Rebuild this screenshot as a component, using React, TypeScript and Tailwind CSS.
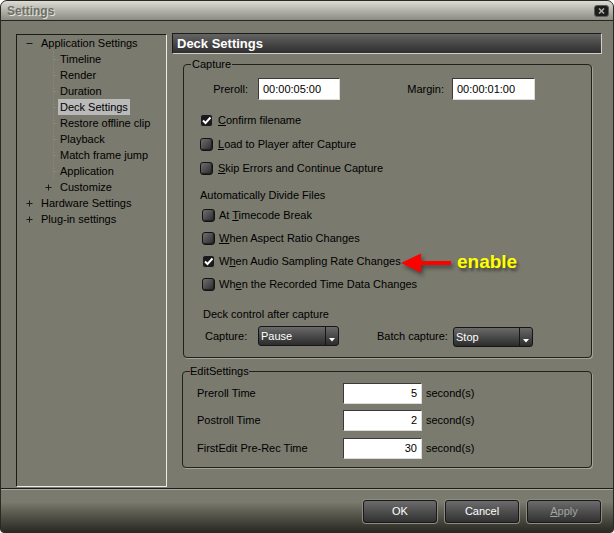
import React from 'react';

const font = "font-['Liberation_Sans',Arial,sans-serif]";

const Box: React.FC<{ checked?: boolean }> = ({ checked }) => (
    checked ? (
        <div className="w-[13px] h-[13px] rounded-[3px] border border-[#7a7a76] bg-[#1a1a1a] flex items-center justify-center">
            <svg width="11" height="11" viewBox="0 0 11 11">
                <path d="M2 5.5 L4.5 8 L9.5 2.5" stroke="#fff" strokeWidth="2" fill="none" />
            </svg>
        </div>
    ) : (
        <div className="w-[13px] h-[13px] rounded-[3px] border border-[#121212] bg-gradient-to-br from-[#707070] to-[#2c2c2c] shadow-[inset_-1px_-1px_1px_#222]" />
    )
);

const CheckRow: React.FC<{ checked?: boolean; h: string; pl: string; gap: string; children: React.ReactNode }> = ({ checked, h, pl, gap, children }) => (
    <div className={`flex items-center ${h} ${pl} ${gap}`}>
        <Box checked={checked} />
        <span>{children}</span>
    </div>
);

const Field: React.FC<{ value: string; w: string; right?: boolean; h?: string }> = ({ value, w, right, h }) => (
    <div className={`${w} ${h ?? 'h-[22px]'} bg-white border border-t-[#3a3a3a] border-l-[#3a3a3a] border-b-[#dcdcd4] border-r-[#dcdcd4] flex items-center px-[4px] ${right ? 'justify-end' : ''}`}>
        {value}
    </div>
);

const Select: React.FC<{ value: string; w: string; extra?: string }> = ({ value, w, extra }) => (
    <div className={`${w} ${extra ?? ''} h-[20px] rounded-[3px] border border-[#161616] bg-gradient-to-b from-[#6a6a6a] to-[#2c2c2c] flex text-white`}>
        <div className="flex-1 flex items-center pl-[2px]">{value}</div>
        <div className="w-[13px] border-l border-[#161616] flex items-end justify-center pb-[3px]">
            <svg width="6" height="4" viewBox="0 0 6 4"><path d="M0 0 H6 L3 3.5 Z" fill="#fff" /></svg>
        </div>
    </div>
);

const Button: React.FC<{ children: React.ReactNode; disabled?: boolean }> = ({ children, disabled }) => (
    <div className={`w-[74px] h-[23px] rounded-[3px] border border-[#181818] shadow-[0_0_0_1px_#8c8c84] bg-gradient-to-b from-[#6c6c6c] to-[#323232] flex items-center justify-center ${disabled ? 'text-[#a4a4a0]' : 'text-white'}`}>
        {children}
    </div>
);

const Expander: React.FC<{ plus?: boolean }> = ({ plus }) => (
    <svg width="7" height="7" viewBox="0 0 7 7">
        <path d="M0.5 3.5 H6.5" stroke="#1a1a1a" strokeWidth="1" />
        {plus && <path d="M3.5 0.5 V6.5" stroke="#1a1a1a" strokeWidth="1" />}
    </svg>
);

const tree = ['Timeline', 'Render', 'Duration', 'Deck Settings', 'Restore offline clip', 'Playback', 'Match frame jump', 'Application'];

export default function App() {
    return (
        <div className={`${font} text-[11px] text-black relative w-[614px] h-[533px] flex flex-col rounded-t-[7px] rounded-b-[4px] border border-[#2a2a24] overflow-hidden bg-[#7a7a6e]`}>
            {/* title bar */}
            <div className="h-[20px] border-b border-[#26261f] bg-gradient-to-b from-[#dcdcd4] to-[#8c8c84] flex items-center justify-between pl-[6px] pr-[4px]">
                <span className="text-[12px] font-bold text-[#6e6e66] [text-shadow:1px_1px_0_#e4e4dc]">Settings</span>
                <div className="w-[15px] h-[12px] rounded-[3px] bg-[#1c1c1c] border border-[#5a5a56] flex items-center justify-center">
                    <svg width="7" height="6" viewBox="0 0 7 6"><path d="M1 0.5 L6 5.5 M6 0.5 L1 5.5" stroke="#b0b0aa" strokeWidth="1.5" /></svg>
                </div>
            </div>

            {/* body */}
            <div className="h-[467px] flex">
                <div className="ml-[15px] mt-[13px] w-[151px] h-[453px] border border-t-[#1a1a18] border-l-[#1a1a18] border-b-[#ecece4] border-r-[#ecece4]">
                    <div className="h-[16px] flex items-center">
                        <span className="w-[24px] flex justify-end pr-[8px]"><Expander /></span>
                        <span>Application Settings</span>
                    </div>
                    <div className="ml-[36px] border-l border-dotted border-[#88887c]">
                        {tree.map((t) => (
                            <div key={t} className="h-[16px] flex items-center">
                                <span className="w-[4px] border-t border-dotted border-[#88887c]" />
                                <span className={`px-[2px] leading-[16px] ${t === 'Deck Settings' ? 'bg-[#bababa]' : ''}`}>{t}</span>
                            </div>
                        ))}
                    </div>
                    <div className="h-[16px] flex items-center">
                        <span className="w-[43px] flex justify-end pr-[8px]"><Expander plus /></span>
                        <span>Customize</span>
                    </div>
                    <div className="h-[16px] flex items-center">
                        <span className="w-[24px] flex justify-end pr-[8px]"><Expander plus /></span>
                        <span>Hardware Settings</span>
                    </div>
                    <div className="h-[16px] flex items-center">
                        <span className="w-[24px] flex justify-end pr-[8px]"><Expander plus /></span>
                        <span>Plug-in settings</span>
                    </div>
                </div>

                <div className="ml-[5px] mt-[12px] w-[430px] flex flex-col">
                    <div className="h-[21px] border border-t-[#1c1c1c] border-l-[#1c1c1c] border-b-[#d0d0c8] border-r-[#d0d0c8] bg-gradient-to-b from-[#646464] to-[#2e2e2e] flex items-center pl-[4px]">
                        <span className="text-white font-bold text-[13px]">Deck Settings</span>
                    </div>

                    <fieldset className="mt-[4px] ml-[11px] w-[409px] h-[300px] border border-[#22221c] rounded-[4px] px-[7px] pt-0 shadow-[1px_1px_0_#a4a49c]">
                        <legend className="leading-[13px] px-[1px]">Capture</legend>
                        <div className="mt-[7px] h-[22px] flex items-center">
                            <span className="w-[57px] text-right">Preroll:</span>
                            <span className="ml-[10px]"><Field value="00:00:05:00" w="w-[82px]" /></span>
                            <span className="w-[104px] text-right">Margin:</span>
                            <span className="ml-[8px]"><Field value="00:00:01:00" w="w-[83px]" /></span>
                        </div>
                        <div className="mt-[8px]">
                            <CheckRow checked h="h-[24px]" pl="pl-[9px]" gap="gap-[5px]"><u>C</u>onfirm filename</CheckRow>
                            <CheckRow h="h-[24px]" pl="pl-[9px]" gap="gap-[5px]"><u>L</u>oad to Player after Capture</CheckRow>
                            <CheckRow h="h-[24px]" pl="pl-[9px]" gap="gap-[5px]"><u>S</u>kip Errors and Continue Capture</CheckRow>
                        </div>
                        <div className="mt-[8px] leading-[14px] pl-[9px]">Automatically Divide Files</div>
                        <div className="mt-[2px]">
                            <CheckRow h="h-[23px]" pl="pl-[11px]" gap="gap-[4px]">At <u>T</u>imecode Break</CheckRow>
                            <CheckRow h="h-[23px]" pl="pl-[11px]" gap="gap-[4px]"><u>W</u>hen Aspect Ratio Changes</CheckRow>
                            <CheckRow checked h="h-[23px]" pl="pl-[11px]" gap="gap-[4px]">W<u>h</u>en Audio Sampling Rate Changes</CheckRow>
                            <CheckRow h="h-[23px]" pl="pl-[11px]" gap="gap-[4px]">Wh<u>e</u>n the Recorded Time Data Changes</CheckRow>
                        </div>
                        <div className="mt-[11px] leading-[14px] pl-[12px]">Deck control after capture</div>
                        <div className="mt-[5px] h-[20px] flex items-center">
                            <span className="ml-[14px] w-[53px]">Capture:</span>
                            <Select value="Pause" w="w-[81px]" />
                            <span className="ml-[38px] w-[76px]">Batch capture:</span>
                            <Select value="Stop" w="w-[80px]" extra="mt-[2px]" />
                        </div>
                    </fieldset>

                    <fieldset className="mt-[7px] ml-[10px] w-[410px] h-[103px] border border-[#22221c] rounded-[4px] px-[7px] pt-0 shadow-[1px_1px_0_#a4a49c]">
                        <legend className="leading-[13px]">EditSettings</legend>
                        {[
                            ['Preroll Time', '5', 'mt-[5px]'],
                            ['Postroll Time', '2', 'mt-[6px]'],
                            ['FirstEdit Pre-Rec Time', '30', 'mt-[7px]'],
                        ].map(([label, v, mt]) => (
                            <div key={label} className={`${mt} h-[21px] flex items-center`}>
                                <span className="ml-[7px] w-[146px]">{label}</span>
                                <Field value={v} w="w-[79px]" h="h-[21px]" right />
                                <span className="ml-[4px]">second(s)</span>
                            </div>
                        ))}
                    </fieldset>
                </div>
            </div>

            {/* footer */}
            <div className="flex-1 border-t border-[#1e1e1a] shadow-[inset_0_1px_0_#a6a69e] bg-gradient-to-b from-[#7a7a6e] from-30% to-[#2a2a23] flex justify-end gap-[8px] pr-[12px] pt-[11px]">
                <Button>OK</Button>
                <Button>Cancel</Button>
                <Button disabled><u>A</u>pply</Button>
            </div>

            {/* annotation */}
            <svg className="absolute left-[396px] top-[248px] drop-shadow-[2px_3px_2px_rgba(0,0,0,0.45)]" width="60" height="28" viewBox="0 0 60 28">
                <path d="M4 14 L24 4.5 L24 12 L54 12 L54 16 L24 16 L24 23.5 Z" fill="#f00" />
            </svg>
            <span className="absolute left-[456px] top-[251px] text-[19px] leading-[19px] font-bold text-[#ffff00] [text-shadow:2px_3px_3px_rgba(0,0,0,0.45)]">enable</span>
        </div>
    );
}
